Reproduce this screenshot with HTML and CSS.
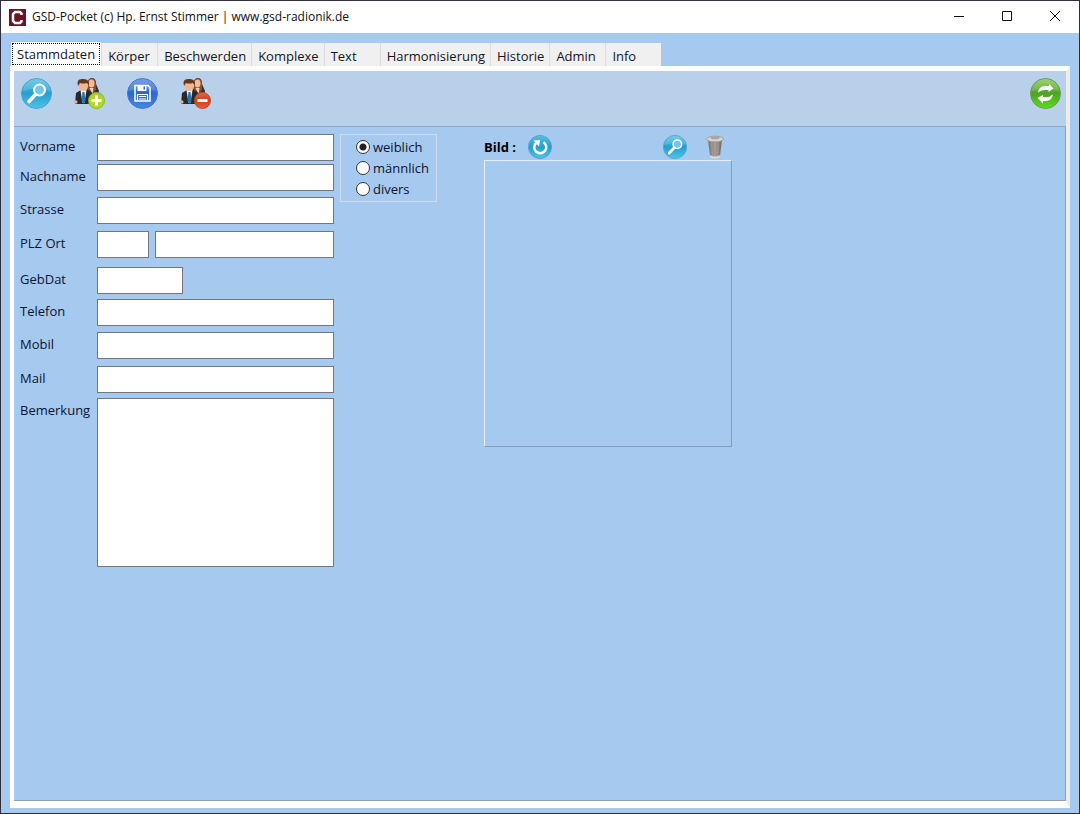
FILE: index.html
```html
<!DOCTYPE html>
<html lang="de">
<head>
    <meta charset="UTF-8">
    <meta name="viewport" content="width=device-width, initial-scale=1.0">
    <title>GSD-Pocket</title>
    <link rel="stylesheet" href="styles.css">
</head>
<body>
    <!-- shared gradients and symbols -->
    <svg class="defs" aria-hidden="true">
        <defs>
            <linearGradient id="cyan" x1="0" y1="0" x2="0" y2="1">
                <stop offset="0" stop-color="#58bfe2"/>
                <stop offset="0.5" stop-color="#259fd0"/>
                <stop offset="1" stop-color="#4fc4e4"/>
            </linearGradient>
            <linearGradient id="blue" x1="0" y1="0" x2="0" y2="1">
                <stop offset="0" stop-color="#5d8fe0"/>
                <stop offset="0.5" stop-color="#2d68cc"/>
                <stop offset="1" stop-color="#4788e6"/>
            </linearGradient>
            <linearGradient id="green" x1="0" y1="0" x2="0" y2="1">
                <stop offset="0" stop-color="#8cc860"/>
                <stop offset="0.5" stop-color="#4fa326"/>
                <stop offset="1" stop-color="#58e010"/>
            </linearGradient>
            <linearGradient id="lime" x1="0" y1="0" x2="0" y2="1">
                <stop offset="0" stop-color="#a3cf3c"/>
                <stop offset="1" stop-color="#b4e01c"/>
            </linearGradient>
            <linearGradient id="red" x1="0" y1="0" x2="0" y2="1">
                <stop offset="0" stop-color="#e0694a"/>
                <stop offset="0.5" stop-color="#cf3d1e"/>
                <stop offset="1" stop-color="#ee5b34"/>
            </linearGradient>
            <linearGradient id="metal" x1="0" y1="0" x2="1" y2="0">
                <stop offset="0" stop-color="#77726f"/>
                <stop offset="0.5" stop-color="#a29d99"/>
                <stop offset="1" stop-color="#6d6866"/>
            </linearGradient>
        </defs>
        <symbol id="search" viewBox="0 0 31 31">
            <circle cx="15.5" cy="15.5" r="15" fill="url(#cyan)" stroke="#4fa3cb"/>
            <path d="M2 13a13.5 12 0 0 1 27 0q-13-5-27 0z" fill="#fff" opacity=".16"/>
            <circle cx="18.500" cy="12" r="5.500" fill="#72c7e6" stroke="#fff" stroke-width="2"/>
            <path d="M14.500 16.500L8 23.500" stroke="#fff" stroke-width="3.500" stroke-linecap="round"/>
        </symbol>
        <symbol id="people" viewBox="0 0 31 31">
            <path d="M12 15L14 4Q15 0 18 0q4 0 4 6l3 7-1 10H12z" fill="#38302f"/>
            <path d="M13 11q-1-11 5-11 5 0 4 12l-3 3z" fill="#8d4d27"/>
            <ellipse cx="17.500" cy="5.500" rx="3" ry="4" fill="#f2bd9a"/>
            <path d="M15.500 10h4l-1 6z" fill="#f1d1bd"/>
            <path d="M1 26l1-11 5-3h6l5 3v11z" fill="#25282d"/>
            <path d="M6.500 12h6l-2 13h-2z" fill="#f1f3f6"/>
            <path d="M8.500 14h2l1 9-2 3-2-3z" fill="#2874a8"/>
            <circle cx="1.800" cy="24" r="1.800" fill="#e9ad88"/>
            <path d="M4.500 5h10l-.5 4q-1 4-4.500 4T5 9z" fill="#f0b791"/>
            <path d="M4 8q-2-7 4-7 8-1 7 7l-2-3q-4 1-7 0z" fill="#633821"/>
        </symbol>
    </svg>

    <div class="window">
        <header class="titlebar">
            <svg class="logo" viewBox="0 0 17 17" aria-hidden="true">
                <rect width="17" height="17" fill="#6a1522"/>
                <path d="M12.500 6V4.500L11 3H6L4 5v7l2 2h5l1.500-1.500V11" fill="none" stroke="#fff" stroke-width="2.500"/>
            </svg>
            <h1>GSD-Pocket (c) Hp. Ernst Stimmer | www.gsd-radionik.de</h1>
            <div class="window-buttons">
                <button type="button" aria-label="Minimieren">
                    <svg viewBox="0 0 12 12"><path d="M1 6.500h10"/></svg>
                </button>
                <button type="button" aria-label="Maximieren">
                    <svg viewBox="0 0 12 12"><path d="M1.500 1.500h9v9h-9z"/></svg>
                </button>
                <button type="button" aria-label="Schließen">
                    <svg viewBox="0 0 12 12"><path d="M1 1l10 10M11 1L1 11"/></svg>
                </button>
            </div>
        </header>

        <main>
            <nav class="tabs">
                <button type="button" class="tab active">Stammdaten</button>
                <button type="button" class="tab">Körper</button>
                <button type="button" class="tab">Beschwerden</button>
                <button type="button" class="tab">Komplexe</button>
                <button type="button" class="tab">Text</button>
                <button type="button" class="tab">Harmonisierung</button>
                <button type="button" class="tab">Historie</button>
                <button type="button" class="tab">Admin</button>
                <button type="button" class="tab">Info</button>
            </nav>

            <section class="panel">
                <div class="toolbar">
                    <button type="button" class="icon-btn" aria-label="Suchen">
                        <svg><use href="#search"/></svg>
                    </button>
                    <button type="button" class="icon-btn" aria-label="Person hinzufügen">
                        <svg viewBox="0 0 31 31">
                            <use href="#people"/>
                            <circle cx="22.500" cy="22.500" r="8" fill="url(#lime)" stroke="#8cb32c"/>
                            <path d="M22.500 17.500v10M17.500 22.500h10" stroke="#fff" stroke-width="3"/>
                        </svg>
                    </button>
                    <button type="button" class="icon-btn" aria-label="Speichern">
                        <svg viewBox="0 0 31 31">
                            <circle cx="15.500" cy="15.500" r="15" fill="url(#blue)" stroke="#4775c5"/>
                            <path d="M2 13a13.500 12 0 0 1 27 0q-13-5-27 0z" fill="#fff" opacity=".14"/>
                            <path d="M8 7.500h13l2 2V23H8z" fill="none" stroke="#fff" stroke-width="1.500"/>
                            <path d="M10.500 7h9v6h-9z" fill="#fff"/>
                            <path d="M16.500 8.500h1.500v3h-1.500z" fill="#2d68cc"/>
                            <path d="M10.500 23v-6.500h10V23M12 18.500h7M12 21h7" fill="none" stroke="#fff" stroke-width="1.200"/>
                        </svg>
                    </button>
                    <button type="button" class="icon-btn" aria-label="Person löschen">
                        <svg viewBox="0 0 31 31">
                            <use href="#people"/>
                            <circle cx="22.500" cy="22.500" r="8" fill="url(#red)" stroke="#c5482d"/>
                            <path d="M17.500 22.500h10" stroke="#fff" stroke-width="3"/>
                        </svg>
                    </button>
                    <button type="button" class="icon-btn refresh" aria-label="Aktualisieren">
                        <svg viewBox="0 0 31 31">
                            <circle cx="15.500" cy="15.500" r="15" fill="url(#green)" stroke="#6b9a58"/>
                            <path d="M2 13a13.500 12 0 0 1 27 0q-13-5-27 0z" fill="#fff" opacity=".14"/>
                            <path d="M8 14.500q1-7 8-6.500h3V6l4.500 4.500-5 3.500v-2q-6-1-10.500 2.500z" fill="#fff"/>
                            <path d="M23 16.500q-1 7-8 6.500h-2v2.500L7.500 20l5.500-3v2q6 1 10-2.500z" fill="#fff"/>
                        </svg>
                    </button>
                </div>

                <form class="content">
                    <div class="fields">
                        <label for="vorname">Vorname</label>
                        <input type="text" id="vorname">
                        <label for="nachname">Nachname</label>
                        <input type="text" id="nachname">
                        <label for="strasse">Strasse</label>
                        <input type="text" id="strasse">
                        <label for="plz">PLZ Ort</label>
                        <div class="plz-ort">
                            <input type="text" id="plz">
                            <input type="text" id="ort" aria-label="Ort">
                        </div>
                        <label for="gebdat">GebDat</label>
                        <input type="text" id="gebdat" class="date">
                        <label for="telefon">Telefon</label>
                        <input type="text" id="telefon">
                        <label for="mobil">Mobil</label>
                        <input type="text" id="mobil">
                        <label for="mail">Mail</label>
                        <input type="text" id="mail">
                        <label for="bemerkung">Bemerkung</label>
                        <textarea id="bemerkung"></textarea>
                    </div>

                    <fieldset class="gender" aria-label="Geschlecht">
                        <label><input type="radio" name="gender" checked>weiblich</label>
                        <label><input type="radio" name="gender">männlich</label>
                        <label><input type="radio" name="gender">divers</label>
                    </fieldset>

                    <div class="picture">
                        <div class="picture-bar">
                            <strong>Bild :</strong>
                            <button type="button" class="icon-btn small" aria-label="Bild neu laden">
                                <svg viewBox="0 0 24 24">
                                    <circle cx="12" cy="12" r="11.500" fill="url(#cyan)" stroke="#4fa3cb"/>
                                    <path d="M15.500 7.200A6 6 0 1 1 8 8" fill="none" stroke="#fff" stroke-width="2.500"/>
                                    <path d="M5.500 5.500l6.500-.5-1 6.500z" fill="#fff"/>
                                </svg>
                            </button>
                            <button type="button" class="icon-btn small find" aria-label="Bild suchen">
                                <svg><use href="#search"/></svg>
                            </button>
                            <button type="button" class="icon-btn small" aria-label="Bild löschen">
                                <svg viewBox="0 0 24 24">
                                    <path d="M5 5h14l-2 16q-5 3-10 0z" fill="url(#metal)"/>
                                    <path d="M8.500 7l1 14M12 7v15M15.500 7l-1 14" stroke="#aaa5a1" stroke-width=".7"/>
                                    <path d="M7 20q5 3 10 0l-.3 2.500q-4.700 2-9.400 0z" fill="#dedcda"/>
                                    <ellipse cx="12" cy="4" rx="8.500" ry="2.800" fill="#d9d5d2" stroke="#a5a09d"/>
                                    <ellipse cx="12" cy="2.800" rx="4.500" ry="1.500" fill="#aaa5a1"/>
                                </svg>
                            </button>
                        </div>
                        <div class="picture-frame"></div>
                    </div>
                </form>
            </section>
        </main>
    </div>
</body>
</html>
```
FILE: styles.css
```css
* {
    box-sizing: border-box;
}
body {
    margin: 0;
    font-family: "Open Sans", "Noto Sans", sans-serif;
    font-size: 13px;
    color: #0c1430;
}
button, input, textarea {
    font: inherit;
    color: inherit;
}
button {
    padding: 0;
    border: none;
    background: none;
}
.defs {
    position: absolute;
    width: 0;
    height: 0;
}
.window {
    display: flex;
    flex-direction: column;
    min-height: 100vh;
    border: 1px solid #30303c;
    background-color: #a6c9ef;
}

/* title bar */
.titlebar {
    display: flex;
    align-items: center;
    height: 32px;
    padding-left: 8px;
    background-color: #fff;
    color: #111;
}
.logo {
    width: 17px;
    height: 17px;
    margin-right: 6px;
}
.titlebar h1 {
    margin: 0;
    font-size: 12px;
    font-weight: normal;
    line-height: 30px;
}
.window-buttons {
    display: flex;
    margin-left: auto;
}
.window-buttons button {
    width: 48px;
    height: 32px;
}
.window-buttons svg {
    width: 12px;
    height: 12px;
    fill: none;
    stroke: #111;
}

/* tabs */
main {
    display: flex;
    flex-direction: column;
    flex: 1;
    padding: 9px 9px 5px;
}
.tabs {
    display: flex;
    align-items: flex-end;
    padding-left: 1px;
}
.tab {
    min-width: 56px;
    height: 23px;
    padding: 3px 5px 0 6px;
    border-left: 1px solid #dcdcdc;
    background-color: #f0f0f0;
    color: #15151f;
    text-align: left;
    line-height: 20px;
}
.tab.active {
    height: 24px;
    padding: 0 4px;
    border: 2px solid #fff;
    background-color: #fff;
    outline: 1px dotted #111;
    outline-offset: -2px;
}

/* panel */
.panel {
    display: flex;
    flex-direction: column;
    flex: 1;
    border: 4px solid #fff;
    border-top-width: 5px;
    border-bottom-width: 7px;
    border-right-color: #ececec;
    box-shadow: inset -1px -1px #999fa8;
}
.toolbar {
    display: flex;
    gap: 22px;
    height: 56px;
    padding: 7px 5px 0 7px;
    border-bottom: 1px solid #8fa5c4;
    background-color: #b9d0ea;
}
.icon-btn {
    width: 31px;
    height: 31px;
}
.icon-btn svg {
    display: block;
    width: 100%;
    height: 100%;
}
.icon-btn.small {
    width: 24px;
    height: 24px;
}
.refresh {
    margin-left: auto;
}

/* form */
.content {
    display: flex;
    align-items: flex-start;
    padding: 7px 6px;
}
.fields {
    display: grid;
    grid-template-columns: 77px 237px;
    grid-template-rows: 30px 33px 34px 36px 32px 33px 34px 32px auto;
    align-items: start;
}
.fields label {
    line-height: 24px;
}
.fields input, .fields textarea {
    display: block;
    width: 100%;
    height: 27px;
    margin: 0;
    padding: 2px 4px;
    border: 1px solid #73777d;
    border-radius: 0;
    background-color: #fff;
}
.fields .date {
    width: 86px;
}
.fields textarea {
    height: 169px;
    resize: none;
}
.plz-ort {
    display: grid;
    grid-template-columns: 52px 1fr;
    gap: 6px;
}
.gender {
    width: 97px;
    min-width: 0;
    margin: 0 0 0 6px;
    padding: 1px 0 2px 15px;
    border: 1px solid #cbdcf0;
}
.gender label {
    display: flex;
    align-items: center;
    gap: 3px;
    height: 21px;
}
.gender input {
    appearance: none;
    width: 14px;
    height: 14px;
    margin: 0;
    border: 1px solid #333;
    border-radius: 50%;
    background-color: #fff;
}
.gender input:checked {
    background-image: radial-gradient(circle, #222 3px, transparent 4px);
}

/* picture */
.picture {
    width: 248px;
    margin-left: 47px;
}
.picture-bar {
    display: flex;
    align-items: center;
    height: 26px;
    padding-right: 5px;
    color: #000;
}
.picture-bar strong {
    width: 44px;
}
.picture-bar .find {
    margin: 0 16px 0 auto;
}
.picture-frame {
    height: 287px;
    border: 1px solid;
    border-color: #e6eff9 #8b9bb0 #8b9bb0 #e6eff9;
}
```
